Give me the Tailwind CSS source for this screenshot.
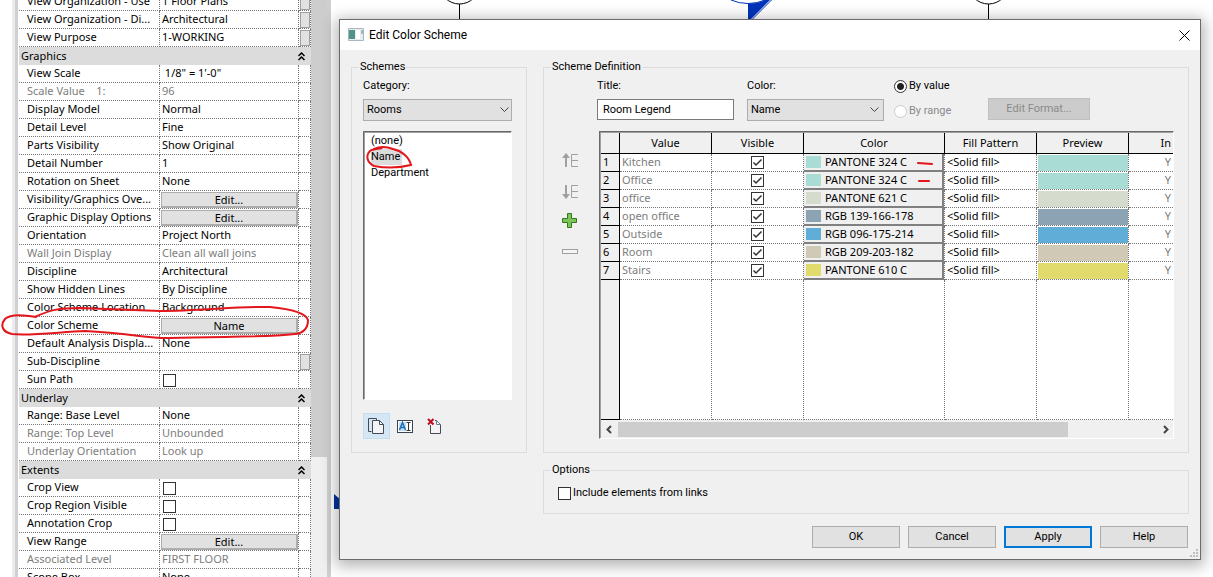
<!DOCTYPE html>
<html lang="en">
<head>
  <meta charset="UTF-8">
  <meta name="viewport" content="width=device-width, initial-scale=1.0">
  <title>Edit Color Scheme</title>
  <script src="https://cdn.jsdelivr.net/npm/@tailwindcss/browser@4"></script>
</head>
<body class="relative h-screen overflow-hidden bg-white font-['Noto_Sans','Open_Sans',sans-serif] text-[11px] text-black">

  <!-- drawing view behind the dialog -->
  <svg class="absolute left-0 top-0" width="1213" height="577" fill="none" stroke="#000" stroke-width="1">
    <circle cx="459.500" cy="-16" r="20" />
    <path d="M459.500 4V20" />
    <circle cx="988.500" cy="-16" r="20" />
    <path d="M988.500 4V20" />
    <path d="M748 3.500Q758 4 765 0H770L750 20H748Z" fill="#0033b8" stroke="none" />
    <path d="M731 0Q739 3.500 748 3.500T765 0M771.500 0L751.500 20" stroke="#0033b8" />
    <path d="M334 494L341 500V509H334Z" fill="#0033a0" stroke="none" />
  </svg>

  <!-- properties palette -->
  <aside class="relative ml-3 flex h-full w-[319px] overflow-hidden">
    <div class="w-[3px] shrink-0 bg-[#ececee]"></div>
    <div class="w-[3px] shrink-0 bg-[#cfcfd4]"></div>
    <div class="ml-px w-[292px] shrink-0 bg-white">
      <table class="-mt-[7px] w-full table-fixed border-separate border-spacing-0">
        <colgroup><col class="w-[141px]"><col class="w-[139px]"><col class="w-3"></colgroup>
        <tbody id="properties"></tbody>
      </table>
    </div>
    <div class="w-4 shrink-0 bg-[#f0f0f0]">
      <div class="h-[457px] bg-[#cdcdcd]"></div>
    </div>
    <div class="w-1 shrink-0 bg-[#cfcfcf]"></div>
  </aside>

  <!-- dialog -->
  <main class="absolute left-[339px] right-3 top-[19px] border border-[#6b6b6b] bg-[#f0f0f0] font-[Roboto,'Noto_Sans',sans-serif] shadow-[0_3px_14px_3px_rgba(0,0,0,0.3)]">
    <header class="flex h-[30px] items-center bg-white pl-2 pr-2">
      <svg width="16" height="14" viewBox="0 0 16 14">
        <path d="M0.500 0.500H15.500V12.500H0.500Z" fill="#e4eef2" stroke="#a9b6bf" />
        <path d="M1 2H7V11H1Z" fill="#4f9484" />
        <path d="M8 2H12V11H8Z" fill="#fff" />
        <path d="M13 2H15V6H13Z" fill="#a9b6bf" />
      </svg>
      <h1 class="ml-[5px] flex-1 text-xs">Edit Color Scheme</h1>
      <button type="button" aria-label="Close" class="p-0.5">
        <svg width="11" height="11" viewBox="0 0 11 11" fill="none" stroke="#000"><path d="M0.500 0.500L10.500 10.500M10.500 0.500L0.500 10.500" /></svg>
      </button>
    </header>

    <div class="flex gap-4 px-[11px] pt-2.5">
      <fieldset class="w-[176px] shrink-0 border border-[#dcdcdc] px-[11px] pb-2">
        <legend class="-ml-1 px-px leading-[14px]">Schemes</legend>
        <label for="category" class="mt-1 block leading-4">Category:</label>
        <div class="relative mt-[5px]">
          <select id="category" class="block h-[22px] w-[149px] appearance-none border border-[#adadad] bg-[#e1e1e1] px-[3px]">
            <option>Rooms</option>
          </select>
          <svg class="pointer-events-none absolute right-1.5 top-2" width="9" height="6" fill="none" stroke="#444"><path d="M0.500 0.500L4.500 4.500L8.500 0.500" /></svg>
        </div>
        <ul class="mt-2.5 h-[269px] w-[149px] border border-b-white border-l-[#696969] border-r-white border-t-[#696969] bg-white pt-px leading-4 shadow-[inset_1px_1px_0_#a0a0a0]">
          <li class="pl-[7px]">(none)</li>
          <li class="pl-[7px]"><span class="block w-[31px] bg-[#dcdcdc]">Name</span></li>
          <li class="pl-[7px]">Department</li>
        </ul>
        <div class="mt-[13px] flex h-[26px] items-center gap-px">
          <button type="button" aria-label="Duplicate" class="flex h-[26px] w-[27px] items-center justify-center border border-[#c5ddf0] bg-[#d5e6f4]">
            <svg width="17" height="17" viewBox="0 0 17 17" stroke="#444b57">
              <path d="M3.500 13.500H0.500V0.500H8.500V2.500" fill="none" />
              <path d="M4.500 2.500H11.500L15.500 6.500V15.500H4.500Z" fill="#f4f4f6" />
              <path d="M11.500 2.500V6.500H15.500Z" fill="#fff" />
            </svg>
          </button>
          <button type="button" aria-label="Rename" class="flex h-[26px] w-7 items-center justify-center">
            <svg width="16" height="13" viewBox="0 0 16 13">
              <rect x="0.500" y="0.500" width="15" height="12" fill="#fff" stroke="#3b4350" />
              <path d="M2 2H9V11H2Z" fill="#bfe0f7" />
              <path d="M2.500 10L5.500 2.500L8.500 10M3.500 7.500H7.500" fill="none" stroke="#1f6fb5" stroke-width="1.500" />
              <path d="M9.500 2.500H13.500M11.500 2.500V10.500M9.500 10.500H13.500" fill="none" stroke="#333" />
            </svg>
          </button>
          <button type="button" aria-label="Delete" class="flex h-[26px] w-7 items-center justify-center">
            <svg width="15" height="17" viewBox="0 0 15 17">
              <path d="M3.500 7V15.500H13.500V6.500L9.500 2.500H8" fill="#f4f4f6" stroke="#444b57" />
              <path d="M9.500 2.500V6.500H13.500Z" fill="#fff" stroke="#6b7d94" />
              <path d="M1 1L6.500 6.500M6.500 1L1 6.500" stroke="#c00d1e" stroke-width="2" />
            </svg>
          </button>
        </div>
      </fieldset>

      <fieldset class="min-w-0 flex-1 border border-[#dcdcdc] pb-[13px] pl-2.5 pr-3.5">
        <legend class="-ml-[3px] px-px leading-[14px]">Scheme Definition</legend>
        <div class="flex pl-[43px]">
          <div class="w-[150px]">
            <label for="title" class="mt-1 block leading-4">Title:</label>
            <input id="title" type="text" value="Room Legend" class="mt-[5px] block h-[21px] w-[137px] border border-[#7a7a7a] bg-white px-[5px]">
          </div>
          <div class="relative w-[147px]">
            <label for="color" class="mt-1 block leading-4">Color:</label>
            <select id="color" class="mt-[5px] block h-[22px] w-[137px] appearance-none border border-[#adadad] bg-[#e1e1e1] px-[3px]">
              <option>Name</option>
            </select>
            <svg class="pointer-events-none absolute bottom-2 right-[15px]" width="9" height="6" fill="none" stroke="#444"><path d="M0.500 0.500L4.500 4.500L8.500 0.500" /></svg>
          </div>
          <div class="w-[94px] pt-1">
            <label class="flex h-4 items-center gap-0.5">
              <input type="radio" name="by" checked class="size-[13px] appearance-none rounded-full border border-[#333] bg-white bg-[radial-gradient(circle,#222_0_3px,transparent_4px)]">By value
            </label>
            <label class="mt-[9px] flex h-4 items-center gap-0.5 text-[#8a8a8a]">
              <input type="radio" name="by" disabled class="size-[13px] appearance-none rounded-full border border-[#cccccc] bg-white">By range
            </label>
          </div>
          <button type="button" disabled class="mt-6 h-[22px] w-[102px] border border-[#bfbfbf] bg-[#cccccc] text-[#8a8a8a]">Edit Format...</button>
        </div>

        <div class="mt-2.5 flex">
          <div class="flex w-[45px] shrink-0 flex-col items-start pl-2 pt-[22px]">
            <button type="button" aria-label="Move up"><svg class="block" width="17" height="15" fill="none" stroke="#a0a0a0"><path d="M4 3V14" stroke-width="2" /><path d="M0 5L4 0L8 5Z" fill="#a0a0a0" stroke="none" /><path d="M16 1.500H9.500V13.500H16M9.500 7.500H16" /></svg></button>
            <button type="button" aria-label="Move down" class="mt-4"><svg class="block" width="17" height="15" fill="none" stroke="#a0a0a0"><path d="M4 1V12" stroke-width="2" /><path d="M0 10L4 15L8 10Z" fill="#a0a0a0" stroke="none" /><path d="M16 1.500H9.500V13.500H16M9.500 7.500H16" /></svg></button>
            <button type="button" aria-label="Add value" class="mt-3.5"><svg class="block" width="16" height="16"><path d="M5.500 0.500H9.500V5.500H14.500V9.500H9.500V14.500H5.500V9.500H0.500V5.500H5.500Z" fill="#7cc35a" stroke="#2f7a1f" /></svg></button>
            <button type="button" aria-label="Remove value" class="mt-5"><svg class="block" width="16" height="5"><rect x="0.500" y="0.500" width="15" height="4" fill="#f4f4f4" stroke="#a0a0a0" /></svg></button>
          </div>
          <div class="min-w-0 flex-1 border border-b-white border-l-[#696969] border-r-white border-t-[#696969] font-['Noto_Sans','Open_Sans',sans-serif] shadow-[inset_1px_1px_0_#a0a0a0]">
            <div class="ml-px mt-px overflow-hidden bg-white">
              <table class="w-full table-fixed border-separate border-spacing-0">
                <colgroup><col class="w-[19px]"><col class="w-[92px]"><col class="w-[92px]"><col class="w-[141px]"><col class="w-[92px]"><col class="w-[92px]"><col></colgroup>
                <thead>
                  <tr class="h-[21px] bg-[#f0f0f0]">
                    <th class="border-b border-r border-black p-0"></th>
                    <th class="border-b border-r border-black p-0 font-normal">Value</th>
                    <th class="border-b border-r border-black p-0 font-normal">Visible</th>
                    <th class="border-b border-r border-black p-0 font-normal">Color</th>
                    <th class="border-b border-r border-black p-0 font-normal">Fill Pattern</th>
                    <th class="border-b border-r border-black p-0 font-normal">Preview</th>
                    <th class="border-b border-black p-0 pr-0.5 text-right font-normal">In</th>
                  </tr>
                </thead>
                <tbody id="scheme"></tbody>
              </table>
            </div>
            <div class="flex h-[18px] items-center">
              <svg class="mx-1.5" width="6" height="9" fill="none" stroke="#444" stroke-width="2"><path d="M5 1L1.500 4.500L5 8" /></svg>
              <div class="h-[15px] w-[450px] bg-[#cdcdcd]"></div>
              <svg class="ml-auto mr-1" width="6" height="9" fill="none" stroke="#444" stroke-width="2"><path d="M1 1L4.500 4.500L1 8" /></svg>
            </div>
          </div>
        </div>
      </fieldset>
    </div>

    <fieldset class="ml-[203px] mr-[11px] mt-2.5 border border-[#dcdcdc] pb-3 pl-3.5">
      <legend class="-ml-[7px] px-px leading-[14px]">Options</legend>
      <label class="mt-2 flex h-4 items-center gap-0.5 pt-px">
        <input type="checkbox" class="size-[13px] appearance-none border border-[#333] bg-white">Include elements from links
      </label>
    </fieldset>

    <footer class="flex justify-end gap-2 pb-[11px] pr-3 pt-3">
      <button type="button" class="h-[22px] w-[88px] border border-[#adadad] bg-[#e1e1e1]">OK</button>
      <button type="button" class="h-[22px] w-[88px] border border-[#adadad] bg-[#e1e1e1]">Cancel</button>
      <button type="button" class="h-[22px] w-[88px] border-2 border-[#0078d7] bg-[#e1e1e1]">Apply</button>
      <button type="button" class="h-[22px] w-[88px] border border-[#adadad] bg-[#e1e1e1]">Help</button>
    </footer>
    <svg class="absolute bottom-0.5 right-0.5" width="8" height="8" fill="#bfbfbf"><path d="M6 0h2v2h-2zM3 3h2v2h-2zM6 3h2v2h-2zM0 6h2v2h-2zM3 6h2v2h-2zM6 6h2v2h-2z" /></svg>
  </main>

  <!-- red pen markup -->
  <svg class="pointer-events-none absolute left-0 top-0" width="1213" height="577" fill="none" stroke="#e3161b" stroke-width="2" stroke-linecap="round">
    <path d="M35 317C50 310 58 308 80 308C110 309 135 310 160 311C200 311 240 306 270 307C290 309 306 313 308 320C308 328 304 333 295 334C260 338 220 336 170 338C150 339 130 333 85 331C60 332 30 336 12 334C2 332 0 325 5 319C10 314 25 315 36 317" />
    <path d="M374 149C380 146 388 147 393 149C402 151 409 157 411 165C399 168 385 168 374 166C366 162 366 155 370 151C372 149 379 149 382 148" />
    <path d="M918 163L932 164" />
    <path d="M919 181L929 181" />
  </svg>

  <script>
    const properties = [
      { name: 'View Organization - Use', value: '1 Floor Plans', more: true },
      { name: 'View Organization - Di...', value: 'Architectural', more: true },
      { name: 'View Purpose', value: '1-WORKING', more: true },
      { group: 'Graphics' },
      { name: 'View Scale', value: '&nbsp;1/8" = 1\'-0"' },
      { name: 'Scale Value &nbsp;&nbsp; 1:', value: '96', off: true },
      { name: 'Display Model', value: 'Normal' },
      { name: 'Detail Level', value: 'Fine' },
      { name: 'Parts Visibility', value: 'Show Original' },
      { name: 'Detail Number', value: '1' },
      { name: 'Rotation on Sheet', value: 'None' },
      { name: 'Visibility/Graphics Ove...', button: 'Edit...' },
      { name: 'Graphic Display Options', button: 'Edit...' },
      { name: 'Orientation', value: 'Project North' },
      { name: 'Wall Join Display', value: 'Clean all wall joins', off: true },
      { name: 'Discipline', value: 'Architectural' },
      { name: 'Show Hidden Lines', value: 'By Discipline' },
      { name: 'Color Scheme Location', value: 'Background' },
      { name: 'Color Scheme', button: 'Name' },
      { name: 'Default Analysis Displa...', value: 'None' },
      { name: 'Sub-Discipline', value: '', more: true },
      { name: 'Sun Path', check: true },
      { group: 'Underlay' },
      { name: 'Range: Base Level', value: 'None' },
      { name: 'Range: Top Level', value: 'Unbounded', off: true },
      { name: 'Underlay Orientation', value: 'Look up', off: true },
      { group: 'Extents' },
      { name: 'Crop View', check: true },
      { name: 'Crop Region Visible', check: true },
      { name: 'Annotation Crop', check: true },
      { name: 'View Range', button: 'Edit...' },
      { name: 'Associated Level', value: 'FIRST FLOOR', off: true },
      { name: 'Scope Box', value: 'None' }
    ];

    const scheme = [
      { value: 'Kitchen', color: 'PANTONE 324 C', fill: '#a8dcd5' },
      { value: 'Office', color: 'PANTONE 324 C', fill: '#a8dcd5' },
      { value: 'office', color: 'PANTONE 621 C', fill: '#d6dccd' },
      { value: 'open office', color: 'RGB 139-166-178', fill: '#8ba3b3' },
      { value: 'Outside', color: 'RGB 096-175-214', fill: '#60add8' },
      { value: 'Room', color: 'RGB 209-203-182', fill: '#d0c9b6' },
      { value: 'Stairs', color: 'PANTONE 610 C', fill: '#e1da6c' }
    ];

    function propertyValue(row) {
      if (row.button) {
        return `<button type="button" aria-label="${row.name}: ${row.button}" class="mt-px block h-4 w-full border border-b-2 border-r-2 border-[#adadad] bg-[#e1e1e1] text-center leading-3">${row.button}</button>`;
      }
      if (row.check) {
        return `<input type="checkbox" aria-label="${row.name}" class="ml-0.5 mt-[3px] block size-[13px] appearance-none border border-[#333] bg-white">`;
      }
      return `<span class="block pl-px">${row.value}</span>`;
    }

    document.getElementById('properties').innerHTML = properties.map(row => {
      if (row.group) {
        return `
          <tr class="h-[18px] bg-[#dcdcdc]">
            <th colspan="3" class="p-0 font-normal">
              <div class="flex h-[18px] items-center justify-between pl-0.5 pr-1.5">${row.group}
                <svg width="7" height="9" fill="none" stroke="#000"><path d="M0.500 4L3.500 1L6.500 4M0.500 8L3.500 5L6.500 8" stroke-width="1.500" /></svg>
              </div>
            </th>
          </tr>`;
      }
      return `
        <tr class="h-[18px] ${row.off ? 'text-[#7d7d7d]' : 'text-black'}">
          <td class="overflow-hidden whitespace-nowrap border-b border-r border-dotted border-[#777] p-0 pl-2 align-top leading-[15px]">${row.name}</td>
          <td class="whitespace-nowrap border-b border-r border-dotted border-[#777] p-0 pl-px align-top leading-[15px]">${propertyValue(row)}</td>
          <td class="border-b border-r border-dotted border-[#777] p-0">${row.more ? `<button type="button" aria-label="Browse ${row.name}" class="ml-px block h-4 w-2.5 border border-[#a0a0a0] bg-[#e1e1e1]"></button>` : ''}</td>
        </tr>`;
    }).join('');

    const rows = scheme.map((row, i) => `
      <tr class="h-[18px]">
        <th class="border-b border-r border-black bg-[#f0f0f0] p-0 pl-0.5 text-left align-top font-normal leading-[15px]">${i + 1}</th>
        <td class="border-b border-r border-dotted border-[#777] p-0 pl-0.5 align-top leading-[15px] text-[#7d7d7d]">${row.value}</td>
        <td class="border-b border-r border-dotted border-[#777] p-0">
          <input type="checkbox" checked aria-label="${row.value} visible" class="mx-auto block size-[13px] appearance-none border border-[#333] bg-white bg-no-repeat checked:bg-[url('data:image/svg+xml,%3Csvg%20xmlns=%22http://www.w3.org/2000/svg%22%20width=%2211%22%20height=%2211%22%3E%3Cpath%20d=%22M1.500%205.500L4%208L9.500%202.500%22%20fill=%22none%22%20stroke=%22%23333%22%20stroke-width=%221.500%22/%3E%3C/svg%3E')] checked:[background-size:11px_11px]">
        </td>
        <td class="border-r border-dotted border-[#777] p-0">
          <button type="button" class="flex h-[18px] w-full items-center gap-1 border-b-2 border-r-2 border-[#808080] bg-[#f0f0f0] pl-0.5">
            <span class="h-3 w-[15px]" style="background: ${row.fill}"></span>${row.color}
          </button>
        </td>
        <td class="whitespace-nowrap border-b border-r border-dotted border-[#777] p-0 pl-0.5 align-top leading-[15px]">&lt;Solid fill&gt;</td>
        <td class="border-b border-r border-dotted border-[#777] p-0 pl-px"><div class="h-4" style="background: ${row.fill}"></div></td>
        <td class="border-b border-dotted border-[#777] p-0 pr-0.5 text-right align-top leading-[15px] text-[#7d7d7d]">Y</td>
      </tr>`).join('');

    // rest of the grid stays empty
    const empty = `
      <tr class="h-[140px]">
        <th class="border-b border-r border-black bg-[#f0f0f0] p-0"></th>
        ${'<td class="border-b border-r border-dotted border-[#777] p-0"></td>'.repeat(5)}
        <td class="border-b border-dotted border-[#777] p-0"></td>
      </tr>`;

    document.getElementById('scheme').innerHTML = rows + empty;
  </script>
</body>
</html>
